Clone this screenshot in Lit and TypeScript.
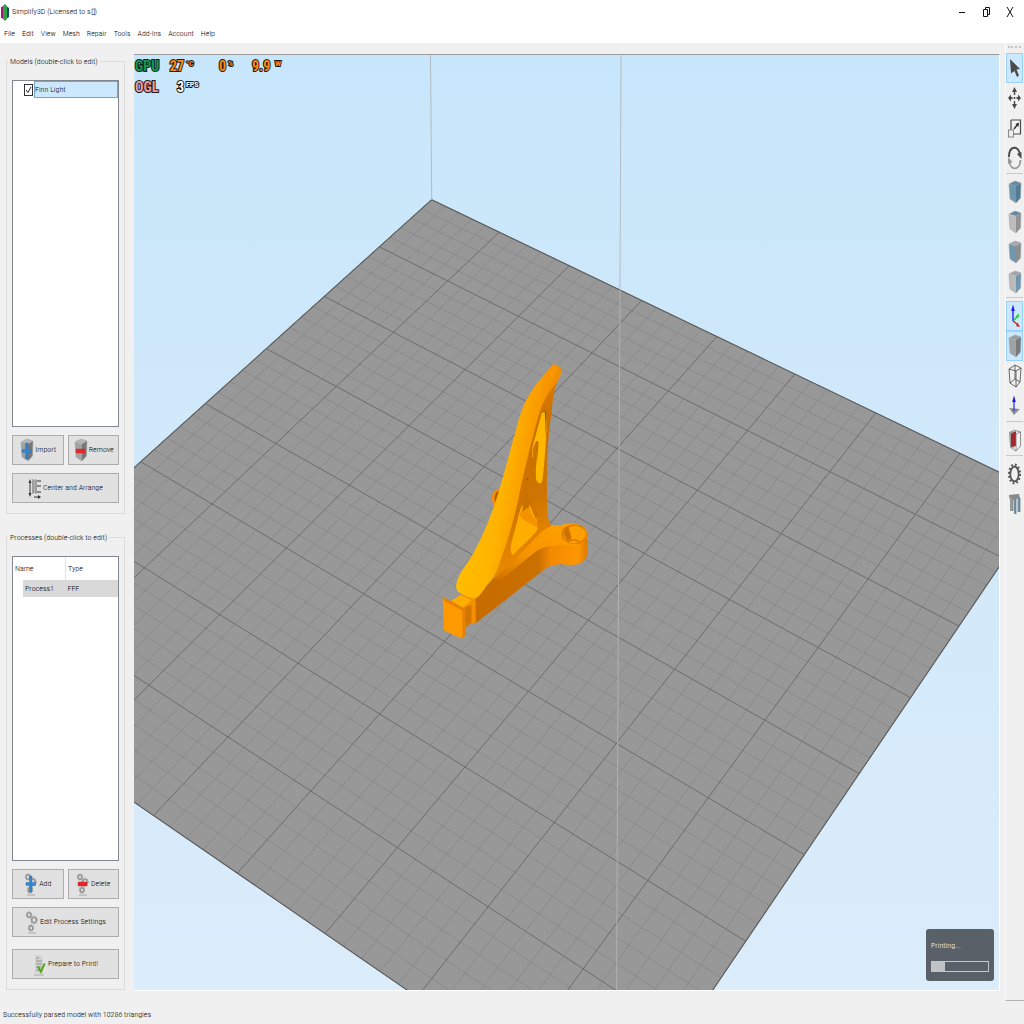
import { LitElement, html, svg, css } from "lit";
import { customElement, state } from "lit/decorators.js";

const ns = (body: unknown, w = 20, h = 30, cls = "ico") =>
  html`<svg class=${cls} width=${w} height=${h} viewBox="0 0 ${w} ${h}" aria-hidden="true">${body}</svg>`;

/* Shaded box used by the view and shading tools. */
const box = (top: string, left: string, right: string) => svg`
  <path d="M3 7 9 4 15 6 10 9Z" fill=${top} />
  <path d="M3 7 10 9 10 26 4 22Z" fill=${left} />
  <path d="M10 9 15 6 14.500 21 10 26Z" fill=${right} />
  <path d="M3 7 9 4 15 6 14.500 21 10 26 4 22Z" fill="none" stroke="#9a9fa2" stroke-width=".5" />`;

const wire = svg`<path d="M3 8 9 4 15 7 10 10ZM3 8 4 22 10 26 10 10M10 26 14 21 15 7M9 4V18L4 22M9 18 14 21" fill="none" stroke="#444" stroke-width=".8" />`;

const plus = svg`<path d="M7.500 8h2.500v6.500h3.500v3h-3.500v6.500h-2.500v-6.500h-3.500v-3h3.500Z" fill="#3586cb" stroke="#2b6da8" stroke-width=".4" />`;
const minus = svg`<rect x="4" y="14" width="9" height="4" rx=".5" fill="#e22a2e" stroke="#b92024" stroke-width=".4" />`;

const cog = (x: number, y: number, r: number) => svg`
  <ellipse cx=${x} cy=${y} rx=${r * 0.8} ry=${r} fill="none" stroke="#969696" stroke-width="1.600" />
  <ellipse cx=${x} cy=${y} rx=${r * 1.15} ry=${r * 1.4} fill="none" stroke="#a2a2a2" stroke-width="1.200" stroke-dasharray="1.200 1.400" />`;
const cogs = svg`${cog(4, 6, 2.3)}${cog(9, 11, 2.8)}${cog(6, 19, 2.3)}<path d="M3 24H11" stroke="#c4c4c4" stroke-width="2" />`;

interface Tool { id: string; label: string; on?: boolean; icon: unknown }
const BLUE = "#6f97b0";
const TOOLS: Tool[][] = [
  [
    { id: "select", label: "Select", on: true, icon: svg`<path d="M4 6 14 16 10.500 16.500 13 22.500 11 24 8.500 18 5 20.500Z" fill="#4a4a4a" />` },
    { id: "move", label: "Translate", icon: svg`<path d="M8.500 4 11 9H6ZM8.500 26 11 21H6ZM2 15 5 11.500V18.500ZM15 15 12 11.500V18.500Z" fill="#4a4a4a" /><path d="M8.500 8V12M8.500 18V22" stroke="#4a4a4a" stroke-width="1.400" /><path d="M4 15H6.500M10.500 15H13M7.700 15h1.600" stroke="#4a4a4a" stroke-width="2" />` },
    { id: "scale", label: "Scale", icon: svg`<path d="M5 7H14.500V21H8" fill="#f4f4f4" stroke="#4a4a4a" stroke-width="1.200" /><path d="M5 7V17" stroke="#4a4a4a" stroke-width="1.200" /><rect x="2.500" y="17" width="5" height="7" fill="#eee" stroke="#888" /><path d="M8 16 12 11" stroke="#333" stroke-width="1.500" /><path d="M13 9.500 12.500 14 9.500 11Z" fill="#333" />` },
    { id: "rotate", label: "Rotate", icon: svg`<path d="M3 14C3 2 13 2 14 12" fill="none" stroke="#4a4a4a" stroke-width="1.900" /><path d="M11 11 15.500 9V16Z" fill="#4a4a4a" /><path d="M3.500 18C4 28 14 28 14.500 17" fill="none" stroke="#9a9a9a" stroke-width="1.900" /><path d="M2 14 6.500 19 2 21Z" fill="#9a9a9a" />` },
  ],
  [
    { id: "iso", label: "Default view", icon: box("#6389a3", "#6f97b0", "#547c97") },
    { id: "top", label: "Top view", icon: box("#6488a5", "#bdbdbd", "#929292") },
    { id: "front", label: "Front view", icon: box("#a8a8a8", BLUE, "#8e8e8e") },
    { id: "side", label: "Side view", icon: box("#a5a5a5", "#bababa", BLUE) },
  ],
  [
    { id: "axes", label: "Show coordinate axes", on: true, icon: svg`<path d="M7 20V8" stroke="#1717f0" stroke-width="1.300" /><path d="M7 3.500 8.800 10H5.200Z" fill="#1717f0" /><path d="M7 20 11 16" stroke="#18c52b" stroke-width="1.300" /><path d="M13 12.500 12.500 17 9.500 15.500Z" fill="#18d52b" /><path d="M7 20 11 23" stroke="#e81313" stroke-width="1.300" /><path d="M14 26 10 25 11.500 21.500Z" fill="#e81313" />` },
    { id: "solid", label: "Solid model", on: true, icon: box("#9a9fa2", "#a0a2a3", "#777b7d") },
    { id: "wire", label: "Wireframe", icon: wire },
    { id: "normals", label: "Show normals", icon: svg`<path d="M3 17 14 18 8 24Z" fill="#8f8f8f" /><path d="M8 20V9" stroke="#2424ee" stroke-width="1.200" /><path d="M8 4.500 9.800 11H6.200Z" fill="#1717f0" />` },
  ],
  [{ id: "section", label: "Cross section", icon: svg`<path d="M3 7 8 5V23L4 22Z" fill="#9a9a9a" /><path d="M5 9 10 6V21L5 22Z" fill="#a3262a" /><path d="M10 9 14.500 7V21L10 26ZM8 5 14.500 7M4 22 10 26" fill="none" stroke="#777" stroke-width=".8" />` }],
  [
    { id: "machine", label: "Machine control panel", icon: svg`<ellipse cx="8.500" cy="15" rx="4.200" ry="7.500" fill="none" stroke="#555" stroke-width="1.800" /><ellipse cx="8.500" cy="15" rx="5.500" ry="9.500" fill="none" stroke="#555" stroke-width="2" stroke-dasharray="1.800 2.200" />` },
    { id: "supports", label: "Customize supports", icon: svg`<path d="M3 6 13 5 14 9 4 12Z" fill="#8a8a8a" /><path d="M4 9H7V22H4Z" fill="#9b9b9b" /><path d="M8 10H10V25H8ZM11.500 9H14V23H11.500Z" fill="#6f93ab" /><path d="M7 10V22M10 10V25M14 9V23" stroke="#6e7477" stroke-width=".7" />` },
  ],
];

const MENUS = ["File", "Edit", "View", "Mesh", "Repair", "Tools", "Add-Ins", "Account", "Help"];

/* Build plate: plane coordinates (0..8 on both sides) to the view. */
const DIV = 8;
const project = (u: number, v: number): [number, number] => {
  const d = 1 - 0.017149 * u - 0.024471 * v;
  return [(59.008 * u - 61.643 * v + 431.7) / d, (28.455 * u + 41.102 * v + 199.7) / d];
};
const pt = (u: number, v: number) => project(u, v).map((n) => n.toFixed(1)).join(" ");

const gridPath = (major: boolean) => {
  let d = "";
  for (let i = 0; i <= DIV * 5; i++) {
    if ((i % 5 === 0) !== major) continue;
    const t = i / 5;
    d += `M${pt(t, 0)}L${pt(t, DIV)}M${pt(0, t)}L${pt(DIV, t)}`;
  }
  return d;
};

@customElement("build-view")
class BuildView extends LitElement {
  static styles = css`
    :host { display: block; position: relative; min-width: 0; min-height: 0; overflow: hidden;
      background: linear-gradient(#c8e6fb, #dbecfa); border-top: 1px solid #9d9d9d; border-right: 1px solid #fff; border-bottom: 1px solid #fff; }
    .scene { display: block; width: 100%; height: 100%; }
  `;
  render() {
    const plate = `M${pt(0, 0)}L${pt(DIV, 0)}L${pt(DIV, DIV)}L${pt(0, DIV)}Z`;
    return html`
      <svg class="scene" viewBox="134 55 865 935" preserveAspectRatio="xMidYMid slice" role="img" aria-label="Build plate with model">
        <defs>
          <linearGradient id="rib" x1="0" y1="0" x2="1" y2=".35">
            <stop offset=".3" stop-color="#ffbd00" /><stop offset=".55" stop-color="#ffb400" /><stop offset=".8" stop-color="#f89500" />
          </linearGradient>
          <linearGradient id="side" x1="0" y1="0" x2="1" y2="0">
            <stop offset="0" stop-color="#c66c00" /><stop offset=".56" stop-color="#ca7000" /><stop offset=".68" stop-color="#f48b00" /><stop offset=".92" stop-color="#ff9600" /><stop offset="1" stop-color="#db7800" />
          </linearGradient>
          <linearGradient id="web" x1="0" y1="0" x2=".2" y2="1">
            <stop offset="0" stop-color="#e98600" /><stop offset=".35" stop-color="#cc7100" /><stop offset=".7" stop-color="#ce7400" /><stop offset="1" stop-color="#ee8c00" />
          </linearGradient>
          <linearGradient id="foot" x1="0" y1="1" x2="1" y2="0">
            <stop offset="0" stop-color="#d07300" /><stop offset=".4" stop-color="#f79500" /><stop offset="1" stop-color="#ffa200" />
          </linearGradient>
        </defs>
        <path d=${plate} fill="#989898" />
        <path d=${gridPath(false)} fill="none" stroke="#858585" stroke-width=".7" />
        <path d=${gridPath(true)} fill="none" stroke="#6c6c6c" stroke-width="1" />
        <path d=${plate} fill="none" stroke="#626262" stroke-width="1.100" />
        <path d="M430.500 55 431.700 199.700" stroke="#b3bcc2" stroke-width="1" />
        <path d="M621 55 620 289" stroke="#b3bcc2" stroke-width="1" />
        <path d="M620 289 616.500 991" stroke="#b0b0b0" stroke-width="1" />
        <g transform="translate(430 350) scale(.3333)">
          <path d="M186 446C184 425 200 412 212 417L222 430 207 490 190 468Z" fill="#f58e00" />
          <path d="M194 446C194 430 202 421 211 422L196 462Z" fill="#a95d00" />
          <path d="M137 745 190 686 335 586 387 580 470 545 473 612C468 636 447 645 418 645 388 640 372 643 352 652L137 820Z" fill="url(#side)" />
          <path d="M190 687 237 610 325 535 352 516 362 525 395 526C409 518 455 516 469 541 477 564 458 583 427 587 401 584 385 584 369 587 344 588 330 595 309 611L240 667C227 682 209 689 190 687Z" fill="url(#foot)" />
          <path d="M394 550C395 525 430 520 449 525 476 535 475 562 458 576L448 582 414 579C401 573 394 565 394 550Z" fill="#e07f00" />
          <path d="M403 553C407 526 445 520 463 541 475 557 460 571 447 575 444 565 421 565 412 574 405 569 401 562 403 553Z" fill="#ff9f00" />
          <path d="M403 553C401 541 406 534 415 529L425 565 411 573Z" fill="#cb7200" />
          <ellipse cx="431" cy="575" rx="16" ry="6" fill="#cb7200" />
          <path d="M416 578C422 569 440 570 446 577 438 582 424 582 416 578Z" fill="#ff9c00" />
          <path d="M387 85C374 108 369 140 365 185 356 250 350 300 351 445 352 500 353 508 364 527L338 542 297 585 238 644 190 687 270 390 320 170Z" fill="url(#web)" />
          <path d="M335 190C340 177 347 177 350 188 350 250 345 330 337 393 331 405 322 400 318 387 317 350 319 305 324 273L315 305 308 325C305 315 306 290 315 264Z" fill="#ffb800" />
          <path d="M320 272C310 285 307 305 309 323L318 295 320 350 326 276Z" fill="#c87000" />
          <path d="M335 190C340 177 347 177 350 188L347 260C347 235 346 210 344 184Z" fill="#9e5700" />
          <path d="M272 475 290 450 319 500 320 505 323 535C323 548 270 592 250 615 241 612 241 600 244 580Z" fill="#ffae00" />
          <path d="M269 490 281 475 297 467 306 494 319 511 323 534 273 504Z" fill="#f59200" />
          <path d="M276 485 292 405 298 470 280 482Z" fill="#c87000" />
          <path d="M289 415C297 450 302 480 319 508L322 488 304 455Z" fill="#cf7600" />
          <circle cx="292" cy="388" r="3" fill="#a55b00" />
          <path d="M370 41C380 46 388 49 392 56 395 72 389 82 380 96 358 127 342 145 329 187 306 265 287 345 267 437 252 510 235 568 205 650 193 680 184 692 170 705 157 730 140 750 122 748L82 724C73 708 83 684 97 661 141 602 169 532 190 475 219 390 240 300 258 240 274 175 290 145 305 124 319 96 349 70 370 41Z" fill="url(#rib)" />
          <path d="M370 41C380 46 388 49 392 56 395 72 389 82 380 96 363 119 352 131 344 145 355 108 378 84 381 54Z" fill="#ef8f00" />
          <path d="M93 733 136 748 136 820 124 818 124 766 96 776 65 752Z" fill="#f58e00" />
          <path d="M65 752 92 735 125 751 97 773Z" fill="#ffad00" />
          <path d="M95 777 124 764 124 819 105 833 105 855 98 863Z" fill="#d37600" />
          <path d="M38 744 49 746 105 776 106 857 92 865 42 841Z" fill="#ff9900" />
          <path d="M38 744 49 746 105 776 98 782 40 751Z" fill="#e58100" />
          <path d="M97 781 106 776 106 857 98 862Z" fill="#e48000" />
        </g>
      </svg>
      <slot></slot>
    `;
  }
}

@customElement("app-root")
class AppRoot extends LitElement {
  static styles = css`
    :host { display: flex; flex-direction: column; height: 100vh; background: #f0f0f0; color: #000;
      font: 300 8px/12px "Roboto Condensed", "Open Sans Condensed", Lato, "Liberation Sans", sans-serif; }
    * { box-sizing: border-box; }
    button { font: inherit; color: inherit; margin: 0; padding: 0; border: 0; background: none; }
    .title { display: flex; align-items: center; justify-content: space-between; height: 24px; background: #fff; }
    .brand { display: flex; align-items: center; gap: 3px; }
    .win { display: flex; gap: 4px; padding-right: 4px; }
    .win button { width: 20px; height: 20px; }
    .menu { display: flex; gap: 7px; height: 19px; padding: 0 4px; background: #fff; }
    .main { flex: 1; min-height: 0; display: grid; grid-template-columns: 134px minmax(0, 1fr) 24px; }
    .panel { display: flex; flex-direction: column; gap: 17px; padding: 12px 9px 1px 6px; min-height: 0; }
    fieldset { flex: 1; min-height: 0; min-width: 0; margin: 0; padding: 12px 5px 10px; border: 1px solid #dcdcdc; display: flex; flex-direction: column; gap: 8px; }
    legend { padding: 0 2px; margin-left: -4px; line-height: 13px; white-space: nowrap; }
    .list { flex: 1; min-height: 0; background: #fff; border: 1px solid #82878f; }
    .item { display: flex; align-items: center; height: 17px; padding-left: 11px; }
    .check { position: relative; display: flex; }
    .check input { appearance: none; width: 9px; height: 12px; margin: 0 1px 0 0; border: 1px solid #333; background: #fff; }
    .check svg { position: absolute; inset: 0; pointer-events: none; }
    .name { flex: 1; height: 17px; line-height: 15px; border: 1px solid #7da2c4; background: #cce8ff; }
    .row { display: grid; grid-template-columns: 1fr 1fr; gap: 4px; }
    .btn { display: flex; align-items: center; justify-content: center; gap: 1px; height: 30px; border: 1px solid #adadad; background: #e1e1e1; white-space: nowrap; }
    .last { margin-top: 4px; }
    table { width: 100%; border-collapse: collapse; table-layout: fixed; }
    th { font-weight: inherit; text-align: left; height: 23px; padding: 0 0 0 2px; }
    th + th { border-left: 1px solid #e3e3e3; }
    td { height: 17px; padding: 0; }
    td span { display: block; height: 17px; line-height: 17px; background: #d9d9d9; padding-left: 2px; }
    td:first-child span { margin-left: 10px; }
    .view { margin-top: 11px; }
    .hud { position: absolute; left: 1px; top: 1px; display: grid; grid-template-columns: 34px 15px 35px 33px 21px auto; grid-auto-rows: 21px; align-items: center;
      font-size: 14px; line-height: 21px; font-weight: bold; color: #ff8a10; -webkit-text-stroke: 2px #1c1c1c; paint-order: stroke fill; }
    .hud .v { text-align: right; }
    .hud sup { display: inline-block; font-size: 8px; line-height: 8px; vertical-align: 5px; padding-left: 2px; }
    .hud > sup { align-self: start; padding-top: 4px; vertical-align: baseline; }
    .gpu { color: #0e9a4b; }
    .ogl { color: #f29a9a; grid-column: 1; }
    .fps { color: #fff; }
    .toast { position: absolute; right: 5px; bottom: 9px; width: 68px; height: 52px; padding: 11px 5px 9px; border-radius: 3px; background: #596067; color: #fff; display: flex; flex-direction: column; justify-content: space-between; }
    progress { appearance: none; display: block; width: 100%; height: 11px; border: 1px solid #c3c7c9; background: #596067; }
    progress::-webkit-progress-bar { background: #596067; }
    progress::-webkit-progress-value { background: #bfc3c5; }
    .tools { display: flex; flex-direction: column; margin: 0 0 -10px 5px; padding: 2px 1px 0 0; border-left: 1px solid #fafafa; border-bottom: 1px solid #b4b4b4; }
    .grip { height: 7px; margin: 1px 2px 0; border-top: 2px dotted #c4c4c4; }
    .group { display: flex; flex-direction: column; }
    .group + .group { border-top: 1px solid #c9c9c9; padding-top: 3px; }
    .tool { display: flex; align-items: center; justify-content: center; height: 30px; border: 1px solid transparent; }
    .tool.on { background: #cce8ff; border-color: #99d1ff; }
    .ico { display: block; flex: none; }
    .status { height: 33px; padding: 18px 3px 0; }
  `;

  @state() private active = new Set(TOOLS.flat().filter((t) => t.on).map((t) => t.id));

  private toggle(id: string) {
    const next = new Set(this.active);
    next.has(id) ? next.delete(id) : next.add(id);
    this.active = next;
  }

  render() {
    return html`
      <header class="title">
        <div class="brand">
          ${ns(svg`<path d="M1 6 4 5V18L1 17Z" fill="#a3157c" /><path d="M6 5 9 7V16L6 18Z" fill="#14486a" /><path d="M3 5 5 3 7 5V18L5 20 3 18Z" fill="#2fa042" />`, 9, 23)}
          <span>Simplify3D (Licensed to s▯)</span>
        </div>
        <div class="win">
          <button aria-label="Minimize">${ns(svg`<path d="M7 10.500H13" stroke="#111" />`, 20, 20)}</button>
          <button aria-label="Restore">${ns(svg`<path d="M7.500 7.500H11.500V14.500H7.500ZM9.500 7V5.500H13.500V12.500H12" fill="none" stroke="#111" />`, 20, 20)}</button>
          <button aria-label="Close">${ns(svg`<path d="M7 5 13 15M13 5 7 15" stroke="#111" />`, 20, 20)}</button>
        </div>
      </header>
      <nav class="menu" aria-label="Main menu">${MENUS.map((m) => html`<button>${m}</button>`)}</nav>
      <main class="main">
        <div class="panel">
          <fieldset>
            <legend>Models (double-click to edit)</legend>
            <div class="list">
              <label class="item">
                <span class="check"><input type="checkbox" checked />
                  <svg width="9" height="12" viewBox="0 0 9 12"><path d="M2 6 4 8.500 7 3" fill="none" stroke="#222" stroke-width="1" /></svg></span>
                <span class="name">Finn Light</span>
              </label>
            </div>
            <div class="row">
              <button class="btn">${ns(svg`<g transform="translate(-1)">${box("#b5b5b5", "#a2a2a2", "#787878")}${plus}</g>`, 15, 30)}Import</button>
              <button class="btn">${ns(svg`<g transform="translate(-1)">${box("#b5b5b5", "#a2a2a2", "#787878")}${minus}</g>`, 15, 30)}Remove</button>
            </div>
            <button class="btn">${ns(svg`<path d="M2 8V20M6 23H11" stroke="#333" stroke-width="1" /><path d="M2 5 3.500 9H.5ZM2 23 3.500 19H.5ZM13 23 10 21V25Z" fill="#333" /><path d="M4 6H9V19H4Z" fill="#b0b0b0" /><path d="M9 7H13M9 12H13M9 18H13" stroke="#8a8a8a" stroke-width="2" /><path d="M5 5V20M8 5V20" stroke="#8a8a8a" />`, 14, 28)}Center and Arrange</button>
          </fieldset>
          <fieldset>
            <legend>Processes (double-click to edit)</legend>
            <div class="list">
              <table>
                <thead><tr><th scope="col">Name</th><th scope="col">Type</th></tr></thead>
                <tbody><tr><td><span>Process1</span></td><td><span>FFF</span></td></tr></tbody>
              </table>
            </div>
            <div class="row">
              <button class="btn">${ns(svg`${cogs}<g transform="translate(-2 -3)">${plus}</g>`, 14, 26)}Add</button>
              <button class="btn">${ns(svg`${cogs}<g transform="translate(-2 -3)">${minus}</g>`, 14, 26)}Delete</button>
            </div>
            <button class="btn">${ns(cogs, 14, 26)}Edit Process Settings</button>
            <button class="btn last">${ns(svg`<path d="M2 5H7L10 8V23H2Z" fill="#d2d2d2" /><path d="M3 8H6M3 11H9M3 14H9M3 17H8M3 20H6" stroke="#909090" /><path d="M1 25H11" stroke="#c4c4c4" stroke-width="2" /><path d="M4 17 6 16 7.500 19.500 11 13 12.500 14 8 24Z" fill="#51a914" />`, 14, 28)}Prepare to Print!</button>
          </fieldset>
        </div>
        <build-view class="view">
          <div class="hud">
            <span class="gpu">GPU</span><span class="v">27</span><sup>°C</sup><span>0<sup>%</sup></span><span>9.9</span><sup>W</sup>
            <span class="ogl">OGL</span><span class="v fps">3</span><sup class="fps">FPS</sup>
          </div>
          <div class="toast" role="status">
            <label for="job">Printing...</label>
            <progress id="job" max="100" value="24"></progress>
          </div>
        </build-view>
        <div class="tools" role="toolbar" aria-label="View tools">
          <div class="grip"></div>
          ${TOOLS.map((g) => html`<div class="group">${g.map((t) => html`
            <button class="tool ${this.active.has(t.id) ? "on" : ""}" aria-label=${t.label} @click=${() => this.toggle(t.id)}>${ns(t.icon, 17, 30)}</button>`)}</div>`)}
        </div>
      </main>
      <footer class="status">Successfully parsed model with 10286 triangles</footer>
    `;
  }
}
